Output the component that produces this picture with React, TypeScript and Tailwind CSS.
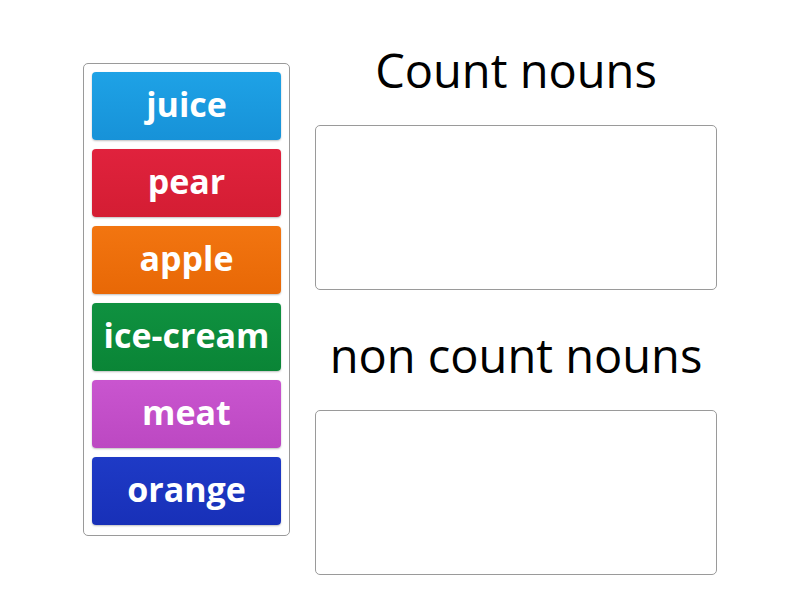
const tiles = [
  { label: "juice", cls: "bg-gradient-to-b from-[#1ea2e6] to-[#1792d8]" },
  { label: "pear", cls: "bg-gradient-to-b from-[#e0223d] to-[#d41d33]" },
  { label: "apple", cls: "bg-gradient-to-b from-[#f27510] to-[#e86806]" },
  { label: "ice-cream", cls: "bg-gradient-to-b from-[#0f9140] to-[#0a8536]" },
  { label: "meat", cls: "bg-gradient-to-b from-[#c955cf] to-[#bc48c2]" },
  { label: "orange", cls: "bg-gradient-to-b from-[#1e3ac6] to-[#1830b8]" },
];

function Group({ title }: { title: string }) {
  return (
    <div className="flex flex-col">
      <div className="h-[85px] flex items-start justify-center">
        <h2 className="text-[47px] leading-[60px] text-black">{title}</h2>
      </div>
      <div className="h-[165px] rounded-[5px] border border-[#9a9a9a] bg-white" />
    </div>
  );
}

export default function App() {
  return (
    <div
      className="w-[800px] h-[600px] bg-white flex justify-center gap-[25px]"
      style={{ fontFamily: '"Open Sans", sans-serif' }}
    >
      <div className="mt-[63px] h-[473px] w-[207px] rounded-[5px] border border-[#9a9a9a] p-[8px] flex flex-col gap-[9px]">
        {tiles.map((t) => (
          <div
            key={t.label}
            className={`h-[68px] rounded-[4px] shadow-[0_1px_2px_rgba(0,0,0,0.25)] flex items-center justify-center ${t.cls}`}
          >
            <span className="text-white font-bold text-[34px] leading-none pb-[4px]">{t.label}</span>
          </div>
        ))}
      </div>
      <div className="w-[402px] flex flex-col gap-[35px] pt-[40px]">
        <Group title="Count nouns" />
        <Group title="non count nouns" />
      </div>
    </div>
  );
}
